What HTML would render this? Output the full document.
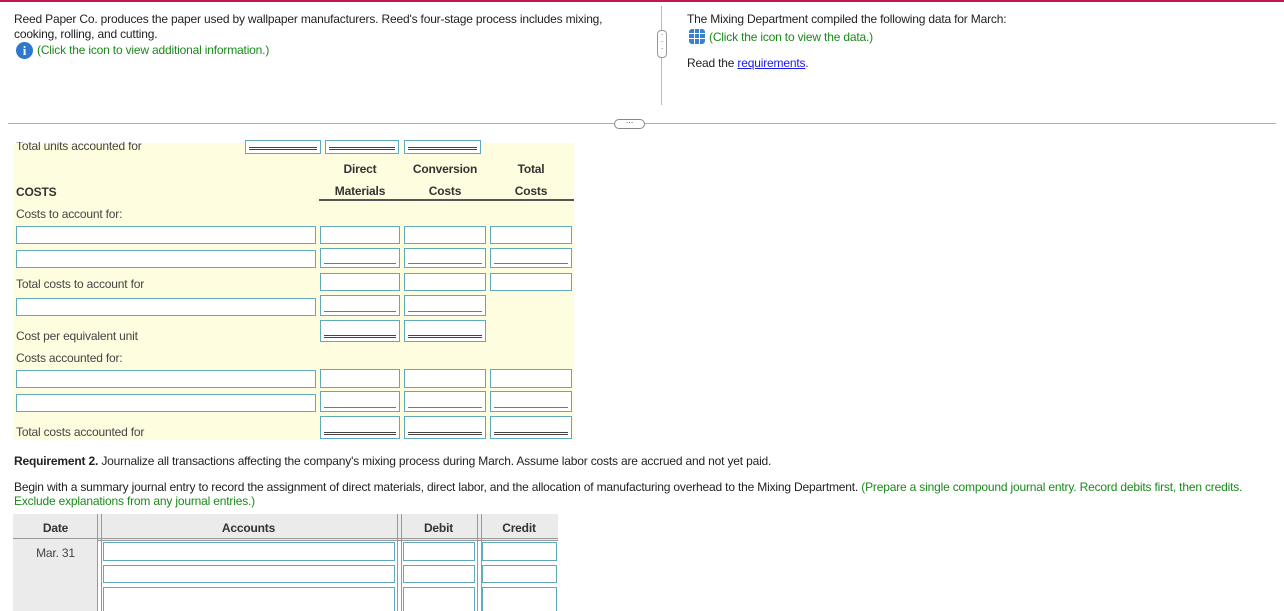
<!DOCTYPE html>
<html style="overflow:hidden"><head><style>
html,body{margin:0;width:1284px;height:611px;overflow:hidden}
body{background:#fff;font-family:"Liberation Sans",Arial,sans-serif;font-size:12px;letter-spacing:-0.18px;color:#222;position:relative}
.a{position:absolute;white-space:nowrap}
.g{color:#1a8a1a}
.b{position:absolute;background:#fff;border:1.5px solid #5fa8bd;box-sizing:border-box}
.s::after{content:"";position:absolute;left:3px;right:3px;bottom:3px;height:1px;background:#777}
.d::after{content:"";position:absolute;left:3px;right:3px;bottom:3px;height:1px;border-top:1.5px solid #444;border-bottom:1.5px solid #444}
.h{font-weight:bold;color:#333}
</style></head><body>
<div style="position:absolute;left:0;top:0;width:1284px;height:2px;background:#c0184a"></div>
<div class="a" style="left:14px;top:12px;line-height:15px">Reed Paper Co. produces the paper used by wallpaper manufacturers. Reed's four-stage process includes mixing,<br>cooking, rolling, and cutting.</div>
<div class="a" style="left:16px;top:42px;width:17px;height:17px;border-radius:50%;background:#2f78d0;color:#fff;font-weight:bold;font-size:13px;text-align:center;line-height:17px;font-family:'Liberation Serif',serif">i</div>
<div class="a g" style="left:37px;top:43px">(Click the icon to view additional information.)</div>
<div style="position:absolute;left:661px;top:6px;width:1px;height:99px;background:#b8bcc4"></div>
<div style="position:absolute;left:657px;top:30px;width:8px;height:26px;border:1px solid #999;border-radius:4px;background:#fff;font-size:8px;line-height:7px;text-align:center;color:#555">·<br>·<br>·</div>
<div class="a" style="left:687px;top:12px">The Mixing Department compiled the following data for March:</div>
<div class="a" style="left:689px;top:29px;width:16px;height:15px;background:#3a7fd6;border-radius:3px;background-image:linear-gradient(90deg,transparent 5px,#fff 5px,#fff 6px,transparent 6px,transparent 10px,#fff 10px,#fff 11px,transparent 11px),linear-gradient(transparent 4px,#fff 4px,#fff 5px,transparent 5px,transparent 9px,#fff 9px,#fff 10px,transparent 10px)"></div>
<div class="a g" style="left:709px;top:30px">(Click the icon to view the data.)</div>
<div class="a" style="left:687px;top:56px">Read the <span style="color:#1a1aee;text-decoration:underline">requirements</span>.</div>
<div style="position:absolute;left:8px;top:123px;width:1268px;height:1px;background:#aab0b8"></div>
<div style="position:absolute;left:614px;top:119px;width:29px;height:8px;border:1px solid #888;border-radius:5px;background:#fff;font-size:8px;line-height:5px;text-align:center">···</div>

<div style="position:absolute;left:13px;top:143px;width:561px;height:297px;background:#fefde0"></div>
<div class="a" style="left:16px;top:139px;color:#444;clip-path:inset(3px 0 0 0)">Total units accounted for</div>
<div class="b d" style="left:245px;top:140px;width:76px;height:14px"></div>
<div class="b d" style="left:325px;top:140px;width:74px;height:14px"></div>
<div class="b d" style="left:404px;top:140px;width:77px;height:14px"></div>
<div class="a h" style="left:320px;top:162px;width:80px;text-align:center">Direct</div>
<div class="a h" style="left:404px;top:162px;width:82px;text-align:center">Conversion</div>
<div class="a h" style="left:490px;top:162px;width:82px;text-align:center">Total</div>
<div class="a h" style="left:16px;top:185px">COSTS</div>
<div class="a h" style="left:320px;top:184px;width:80px;text-align:center">Materials</div>
<div class="a h" style="left:404px;top:184px;width:82px;text-align:center">Costs</div>
<div class="a h" style="left:490px;top:184px;width:82px;text-align:center">Costs</div>
<div style="position:absolute;left:319px;top:199px;width:255px;height:1.5px;background:#555"></div>
<div class="a" style="left:16px;top:207px;color:#444">Costs to account for:</div>
<div class="b" style="left:16px;top:226px;width:300px;height:18px"></div>
<div class="b" style="left:320px;top:226px;width:80px;height:18px"></div>
<div class="b" style="left:404px;top:226px;width:82px;height:18px"></div>
<div class="b" style="left:490px;top:226px;width:82px;height:18px"></div>
<div class="b" style="left:16px;top:250px;width:300px;height:18px"></div>
<div class="b s" style="left:320px;top:248px;width:80px;height:20px"></div>
<div class="b s" style="left:404px;top:248px;width:82px;height:20px"></div>
<div class="b s" style="left:490px;top:248px;width:82px;height:20px"></div>
<div class="a" style="left:16px;top:277px;color:#444">Total costs to account for</div>
<div class="b" style="left:320px;top:273px;width:80px;height:18px"></div>
<div class="b" style="left:404px;top:273px;width:82px;height:18px"></div>
<div class="b" style="left:490px;top:273px;width:82px;height:18px"></div>
<div class="b" style="left:16px;top:298px;width:300px;height:18px"></div>
<div class="b s" style="left:320px;top:295px;width:80px;height:21px"></div>
<div class="b s" style="left:404px;top:295px;width:82px;height:21px"></div>
<div class="b d" style="left:320px;top:320px;width:80px;height:22px"></div>
<div class="b d" style="left:404px;top:320px;width:82px;height:22px"></div>
<div class="a" style="left:16px;top:329px;color:#444">Cost per equivalent unit</div>
<div class="a" style="left:16px;top:351px;color:#444">Costs accounted for:</div>
<div class="b" style="left:16px;top:370px;width:300px;height:18px"></div>
<div class="b" style="left:320px;top:369px;width:80px;height:19px"></div>
<div class="b" style="left:404px;top:369px;width:82px;height:19px"></div>
<div class="b" style="left:490px;top:369px;width:82px;height:19px"></div>
<div class="b" style="left:16px;top:394px;width:300px;height:18px"></div>
<div class="b s" style="left:320px;top:391px;width:80px;height:21px"></div>
<div class="b s" style="left:404px;top:391px;width:82px;height:21px"></div>
<div class="b s" style="left:490px;top:391px;width:82px;height:21px"></div>
<div class="a" style="left:16px;top:425px;color:#444">Total costs accounted for</div>
<div class="b d" style="left:320px;top:416px;width:80px;height:23px"></div>
<div class="b d" style="left:404px;top:416px;width:82px;height:23px"></div>
<div class="b d" style="left:490px;top:416px;width:82px;height:23px"></div>

<div class="a" style="left:14px;top:454px"><b>Requirement 2.</b> Journalize all transactions affecting the company's mixing process during March. Assume labor costs are accrued and not yet paid.</div>
<div class="a" style="left:14px;top:480px;line-height:14px">Begin with a summary journal entry to record the assignment of direct materials, direct labor, and the allocation of manufacturing overhead to the Mixing Department. <span class="g">(Prepare a single compound journal entry. Record debits first, then credits.<br>Exclude explanations from any journal entries.)</span></div>

<div style="position:absolute;left:13px;top:514px;width:545px;height:97px;background:#fff"></div>
<div style="position:absolute;left:13px;top:514px;width:545px;height:24px;background:#ebebeb;border-bottom:3px double #999"></div>
<div style="position:absolute;left:13px;top:540px;width:85px;height:71px;background:#ebebeb"></div>
<div style="position:absolute;left:97px;top:514px;width:3px;height:97px;border-left:1px solid #999;border-right:1px solid #999"></div>
<div style="position:absolute;left:397px;top:514px;width:3px;height:97px;border-left:1px solid #999;border-right:1px solid #999"></div>
<div style="position:absolute;left:477px;top:514px;width:3px;height:97px;border-left:1px solid #999;border-right:1px solid #999"></div>
<div class="a h" style="left:13px;top:521px;width:85px;text-align:center">Date</div>
<div class="a h" style="left:100px;top:521px;width:297px;text-align:center">Accounts</div>
<div class="a h" style="left:400px;top:521px;width:77px;text-align:center">Debit</div>
<div class="a h" style="left:480px;top:521px;width:78px;text-align:center">Credit</div>
<div class="a" style="left:13px;top:546px;width:85px;text-align:center;color:#444">Mar. 31</div>
<div class="b" style="left:103px;top:542px;width:292px;height:19px"></div>
<div class="b" style="left:403px;top:542px;width:72px;height:19px"></div>
<div class="b" style="left:482px;top:542px;width:75px;height:19px"></div>
<div class="b" style="left:103px;top:565px;width:292px;height:18px"></div>
<div class="b" style="left:403px;top:565px;width:72px;height:18px"></div>
<div class="b" style="left:482px;top:565px;width:75px;height:18px"></div>
<div class="b" style="left:103px;top:587px;width:292px;height:24px;border-bottom:none"></div>
<div class="b" style="left:403px;top:587px;width:72px;height:24px;border-bottom:none"></div>
<div class="b" style="left:482px;top:587px;width:75px;height:24px;border-bottom:none"></div>
</body></html>
